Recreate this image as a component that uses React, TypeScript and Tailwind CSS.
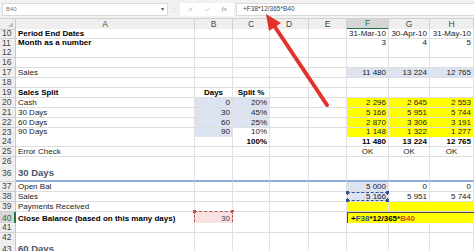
import React from 'react';
import { X, Check } from 'lucide-react';

type Cell = {
  t?: React.ReactNode;
  a?: 'l' | 'r' | 'c';
  b?: boolean;
  bg?: string;
  x?: string;
  span?: boolean;
};

type Row = {
  n: string;
  h: string;
  c?: Partial<Record<'A' | 'B' | 'C' | 'D' | 'E' | 'F' | 'G' | 'H', Cell>>;
  head?: boolean;
  active?: boolean;
};

const COLS = ['A', 'B', 'C', 'D', 'E', 'F', 'G', 'H'] as const;
const GRID = 'grid grid-cols-[16px_179px_38px_37px_39px_38px_42px_41px_44px]';
const BLUE = 'bg-[#dce4f2]';
const YEL = 'bg-[#ffff00]';

const r = (t: string, bg?: string, b?: boolean): Cell => ({ t, a: 'r', bg, b });

const rows: Row[] = [
  { n: '10', h: 'h-[10px]', c: { A: { t: 'Period End Dates', b: true }, F: r('31-Mar-10'), G: r('30-Apr-10'), H: r('31-May-10') } },
  { n: '11', h: 'h-[9px]', c: { A: { t: 'Month as a number', b: true }, F: r('3'), G: r('4'), H: r('5') } },
  { n: '12', h: 'h-[10px]' },
  { n: '16', h: 'h-[10px]' },
  { n: '17', h: 'h-[10px]', c: { A: { t: 'Sales' }, F: r('11 480', BLUE), G: r('13 224', BLUE), H: r('12 765', BLUE) } },
  { n: '18', h: 'h-[10px]' },
  { n: '19', h: 'h-[10px]', c: { A: { t: 'Sales Split', b: true }, B: { t: 'Days', a: 'c', b: true }, C: { t: 'Split %', a: 'c', b: true } } },
  { n: '20', h: 'h-[10px]', c: { A: { t: 'Cash' }, B: r('0', BLUE), C: r('20%', BLUE), F: r('2 296', YEL), G: r('2 645', YEL), H: r('2 553', YEL) } },
  { n: '21', h: 'h-[10px]', c: { A: { t: '30 Days' }, B: r('30', BLUE), C: r('45%', BLUE), F: r('5 166', YEL), G: r('5 951', YEL), H: r('5 744', YEL) } },
  { n: '22', h: 'h-[10px]', c: { A: { t: '60 Days' }, B: r('60', BLUE), C: r('25%', BLUE), F: r('2 870', YEL), G: r('3 306', YEL), H: r('3 191', YEL) } },
  { n: '23', h: 'h-[9px]', c: { A: { t: '90 Days' }, B: r('90', BLUE), C: r('10%'), F: r('1 148', YEL), G: r('1 322', YEL), H: r('1 277', YEL) } },
  { n: '24', h: 'h-[10px]', c: { C: r('100%', undefined, true), F: r('11 480', undefined, true), G: r('13 224', undefined, true), H: r('12 765', undefined, true) } },
  { n: '25', h: 'h-[10px]', c: { A: { t: 'Error Check' }, F: { t: 'OK', a: 'c' }, G: { t: 'OK', a: 'c' }, H: { t: 'OK', a: 'c' } } },
  { n: '26', h: 'h-[9px]' },
  { n: '36', h: 'h-[16px]', head: true, c: { A: { t: '30 Days' } } },
  { n: '37', h: 'h-[10px]', c: { A: { t: 'Open Bal' }, F: r('5 000', BLUE), G: r('0'), H: r('0') } },
  { n: '38', h: 'h-[10px]', c: { A: { t: 'Sales' }, F: { t: '5 166', a: 'r', bg: BLUE, x: 'ref' }, G: r('5 951'), H: r('5 744') } },
  { n: '39', h: 'h-[10px]', c: { A: { t: 'Payments Received' }, F: { bg: YEL }, G: { bg: YEL }, H: { bg: YEL } } },
  {
    n: '40',
    h: 'h-[11px]',
    active: true,
    c: {
      A: { t: 'Close Balance (based on this many days)', b: true },
      B: { t: '30', a: 'r', x: 'red' },
      F: { span: true },
    },
  },
  { n: '41', h: 'h-[10px]' },
  { n: '42', h: 'h-[9px]' },
  { n: '43', h: 'h-[16px]', head: true, c: { A: { t: '60 Days' } } },
];

function FormulaText() {
  return (
    <span className="font-bold text-[8px] text-black">
      +<span className="text-[#2f5597]">F38</span>*12/365*<span className="text-[#d9481c]">B40</span>
    </span>
  );
}

function SheetRow({ row }: { row: Row }) {
  const line = row.head ? 'border-b-2 border-b-[#8eaadb]' : 'border-b border-b-[#dedede]';
  return (
    <div className={`${GRID} ${row.h}`}>
      <div
        className={`flex items-center pl-[2px] text-[8.5px] leading-none border-b border-b-[#d0d0d0] ${
          row.active ? 'bg-[#d6d6d6] text-[#217346] border-r-2 border-r-[#217346]' : 'bg-[#efefef] text-[#444] border-r border-r-[#c8c8c8]'
        }`}
      >
        {row.n}
      </div>
      {COLS.map((k) => {
        const c = row.c?.[k];
        if (row.active && (k === 'G' || k === 'H')) return null;
        if (c?.span) {
          return (
            <div key={k} className={`col-span-3 flex items-center pl-[3px] ${YEL} border border-[#4a4a4a] border-r-0`}>
              <FormulaText />
            </div>
          );
        }
        const align = c?.a === 'r' ? 'justify-end pr-[2px]' : c?.a === 'c' ? 'justify-center' : 'justify-start pl-[2px]';
        const text = row.head
          ? 'text-[9.5px] font-bold text-[#44546a]'
          : `text-[8px] ${c?.b ? 'font-bold text-black' : 'text-[#222]'}`;
        return (
          <div
            key={k}
            className={`relative flex items-center whitespace-nowrap leading-none overflow-visible border-r border-r-[#e1e1e1] ${line} ${align} ${text} ${
              c?.x === 'red' ? 'bg-[#f7e1e1] text-[#444]' : c?.bg ?? 'bg-white'
            }`}
          >
            {c?.t}
            {c?.x === 'ref' && (
              <div className="absolute inset-0 border border-dashed border-[#2f5597]">
                <span className="absolute -left-[2px] -top-[2px] w-[3px] h-[3px] bg-[#2f5597]" />
                <span className="absolute -right-[2px] -top-[2px] w-[3px] h-[3px] bg-[#2f5597]" />
                <span className="absolute -left-[2px] -bottom-[2px] w-[3px] h-[3px] bg-[#2f5597]" />
                <span className="absolute -right-[2px] -bottom-[2px] w-[3px] h-[3px] bg-[#2f5597]" />
              </div>
            )}
            {c?.x === 'red' && (
              <div className="absolute -inset-[1px] border border-dashed border-[#c0504d]">
                <span className="absolute -left-[2px] -top-[2px] w-[3px] h-[3px] bg-[#c0504d]" />
                <span className="absolute -right-[2px] -top-[2px] w-[3px] h-[3px] bg-[#c0504d]" />
                <span className="absolute -left-[2px] -bottom-[2px] w-[3px] h-[3px] bg-[#c0504d]" />
                <span className="absolute -right-[2px] -bottom-[2px] w-[3px] h-[3px] bg-[#c0504d]" />
              </div>
            )}
          </div>
        );
      })}
    </div>
  );
}

export default function App() {
  return (
    <div className="relative w-[474px] h-[251px] overflow-hidden bg-white font-['Liberation_Sans',Arial,sans-serif]">
      {/* formula bar */}
      <div className="flex items-center h-[18px] bg-[#f1f1f1]">
        <div className="ml-[2px] w-[166px] h-[13px] bg-white border border-[#dadada] flex items-center justify-between px-[3px] text-[6px] text-[#777]">
          <span>B40</span>
          <span className="text-[6px] text-[#555]">▾</span>
        </div>
        <div className="w-[12px] flex justify-center text-[8px] text-[#c4c4c4] leading-none">⋮</div>
        <div className="w-[54px] h-[13px] bg-white flex items-center justify-around px-[2px] text-[#888]">
          <X size={7} strokeWidth={1.5} />
          <Check size={7} strokeWidth={1.5} />
          <span className="italic font-['Liberation_Serif',serif] text-[7px] leading-none">fx</span>
        </div>
        <div className="flex-1 h-[13px] ml-[2px] bg-white border border-[#dadada] border-r-0 flex items-center pl-[6px] text-[6.5px] text-[#444]">
          +F38*12/365*B40
        </div>
      </div>

      {/* column headers */}
      <div className={`${GRID} h-[11px] border-t border-t-[#d0d0d0]`}>
        <div className="relative bg-[#efefef] border-r border-r-[#c8c8c8] border-b border-b-[#c8c8c8]">
          <svg className="absolute right-[2px] bottom-[2px]" width="5" height="5" viewBox="0 0 5 5">
            <polygon points="5,0 5,5 0,5" fill="#bdbdbd" />
          </svg>
        </div>
        {COLS.map((k) => (
          <div
            key={k}
            className={`flex items-center justify-center text-[8.5px] leading-none border-r border-r-[#d0d0d0] ${
              k === 'F' ? 'bg-[#d6d6d6] text-[#217346] border-b-2 border-b-[#217346]' : 'bg-[#efefef] text-[#444] border-b border-b-[#c8c8c8]'
            }`}
          >
            {k}
          </div>
        ))}
      </div>

      {rows.map((row) => (
        <SheetRow key={row.n} row={row} />
      ))}

      {/* red annotation arrow */}
      <svg className="absolute left-0 top-0 pointer-events-none" width="474" height="251" viewBox="0 0 474 251">
        <line x1="327" y1="105" x2="275" y2="27" stroke="#e2332b" strokeWidth="4" strokeLinecap="round" />
        <polygon points="266,14 281,23 269,31" fill="#e2332b" />
      </svg>
    </div>
  );
}
